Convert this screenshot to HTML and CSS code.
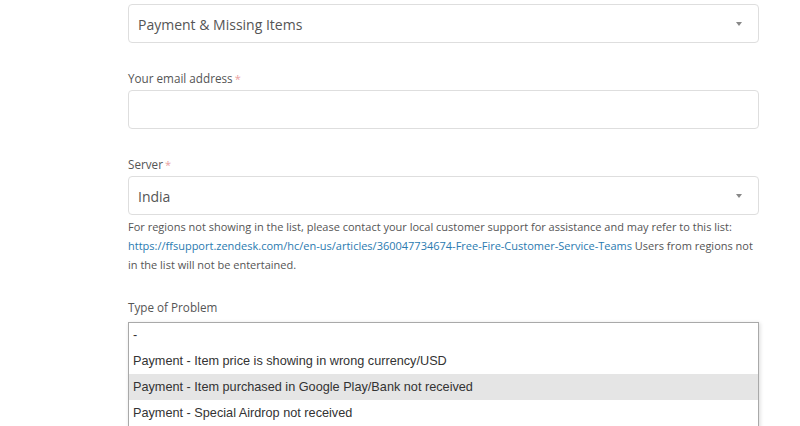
FILE: index.html
```html
<!DOCTYPE html>
<html>
<head>
<meta charset="utf-8">
<link rel="stylesheet" href="styles.css">
</head>
<body>
<form class="form">
  <div class="field first">
    <div class="select">
      <span class="select-value">Payment &amp; Missing Items</span>
      <span class="caret"></span>
    </div>
  </div>
  <div class="field">
    <label class="label">Your email address<span class="req">*</span></label>
    <div class="input"></div>
  </div>
  <div class="field">
    <label class="label">Server<span class="req">*</span></label>
    <div class="select">
      <span class="select-value">India</span>
      <span class="caret"></span>
    </div>
    <p class="hint">For regions not showing in the list, please contact your local customer support for assistance and may refer to this list: <a class="link" href="#">https://ffsupport.zendesk.com/hc/en-us/articles/360047734674-Free-Fire-Customer-Service-Teams</a> Users from regions not in the list will not be entertained.</p>
  </div>
  <div class="field last">
    <label class="label">Type of Problem</label>
    <ul class="listbox">
      <li class="option">-</li>
      <li class="option">Payment - Item price is showing in wrong currency/USD</li>
      <li class="option active">Payment - Item purchased in Google Play/Bank not received</li>
      <li class="option">Payment - Special Airdrop not received</li>
    </ul>
  </div>
</form>
</body>
</html>
```
FILE: styles.css
```css
html, body {
  margin: 0;
  padding: 0;
  background: #fff;
  overflow: hidden;
  height: 426px;
}
body {
  font-family: "Open Sans", "Noto Sans", sans-serif;
  color: #555;
}
.form {
  width: 631px;
  margin-left: 128px;
  padding-top: 4px;
}
.field {
  display: flex;
  flex-direction: column;
  margin-top: 25px;
}
.field.first {
  margin-top: 0;
}
.label {
  font-size: 11.7px;
  line-height: 20px;
  color: #555;
  margin-bottom: 1px;
}
.req {
  color: #e9a0a0;
  margin-left: 2px;
  font-size: 11px;
}
.select, .input {
  box-sizing: border-box;
  height: 39px;
  border: 1px solid #dedede;
  border-radius: 4px;
  display: flex;
  align-items: center;
  justify-content: space-between;
  padding: 0 16px 0 9px;
  background: #fff;
}
.select-value {
  font-size: 14px;
  color: #555;
  margin-top: 1px;
}
.caret {
  width: 0;
  height: 0;
  border-left: 3px solid transparent;
  border-right: 3px solid transparent;
  border-top: 4px solid #888;
}
.hint {
  margin: 2px 0 0;
  font-size: 11px;
  line-height: 19px;
  color: #555;
}
.link {
  color: #2a7ab0;
  text-decoration: none;
}
.field.last {
  margin-top: 23px;
}
.field.last .label {
  margin-bottom: 5px;
}
.listbox {
  list-style: none;
  margin: 0;
  padding: 0;
  box-sizing: border-box;
  border: 1px solid #a9a9a9;
  border-bottom: none;
  box-shadow: 1px 1px 4px rgba(0,0,0,0.15);
  height: 110px;
  font-family: "Liberation Sans", Arial, sans-serif;
  font-size: 12.7px;
  color: #333;
}
.option {
  height: 26px;
  line-height: 26px;
  padding-left: 4px;
}
.option:first-child {
  height: 25px;
  line-height: 25px;
}
.option.active {
  background: #e5e5e5;
}
```
